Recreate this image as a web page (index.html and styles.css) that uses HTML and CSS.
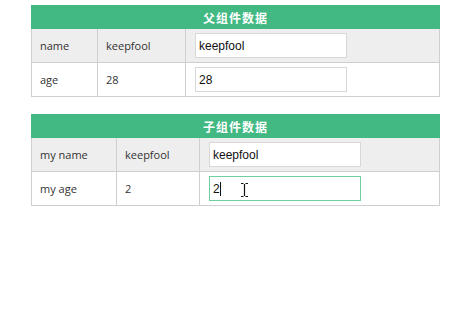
FILE: index.html
```html
<!DOCTYPE html>
<html>
<head>
<meta charset="utf-8">
<link rel="stylesheet" href="styles.css">
</head>
<body>
<div class="page">
  <table class="grid parent">
    <colgroup><col class="w1"><col class="w2"><col></colgroup>
    <tr><th colspan="3">父组件数据</th></tr>
    <tr class="alt">
      <td>name</td>
      <td>keepfool</td>
      <td class="c3"><input class="field" type="text" value="keepfool"></td>
    </tr>
    <tr>
      <td>age</td>
      <td>28</td>
      <td class="c3"><input class="field" type="text" value="28"></td>
    </tr>
  </table>

  <table class="grid child">
    <colgroup><col class="w1"><col class="w2"><col></colgroup>
    <tr><th colspan="3">子组件数据</th></tr>
    <tr class="alt">
      <td>my name</td>
      <td>keepfool</td>
      <td class="c3"><input class="field" type="text" value="keepfool"></td>
    </tr>
    <tr>
      <td>my age</td>
      <td>2</td>
      <td class="c3">
        <div class="field focus"><span>2</span><span class="caret"></span>
          <svg class="ibeam" width="9" height="16" viewBox="0 0 9 16"><path d="M1 1.5h2.5M5.5 1.5H8M4.5 2v12M1 14.5h2.5M5.5 14.5H8" stroke="#111" stroke-width="1.2" fill="none"/></svg>
        </div>
      </td>
    </tr>
  </table>
</div>
</body>
</html>
```
FILE: styles.css
```css
html, body { margin: 0; padding: 0; background: #fff; }
.page {
  padding: 5px 0 0 31px;
  display: flex;
  flex-direction: column;
  gap: 17px;
  font-family: "Open Sans", "DejaVu Sans", sans-serif;
}
.grid {
  border-collapse: collapse;
  width: 409px;
  table-layout: fixed;
  font-size: 11px;
  color: #333;
}
.parent .w1 { width: 66px; }
.parent .w2 { width: 88px; }
.child .w1 { width: 85px; }
.child .w2 { width: 83px; }
.grid th {
  background: #42b983;
  color: #fff;
  height: 22px;
  padding: 0;
  font-family: "Noto Sans CJK SC", sans-serif;
  font-size: 12px;
  font-weight: bold;
  letter-spacing: 1px;
  border: 1px solid #42b983;
}
.grid td {
  border: 1px solid #cfcfcf;
  height: 34px;
  padding: 0 0 0 8px;
  box-sizing: border-box;
}
.grid tr.alt td { background: #eeeeee; }
.grid td.c3 { padding-left: 9px; }
.field {
  display: flex;
  align-items: center;
  position: relative;
  box-sizing: border-box;
  width: 152px;
  height: 25px;
  margin: 0;
  padding: 0 3px;
  border: 1px solid #d8d8d8;
  background: #fff;
  font-family: "Liberation Sans", Arial, sans-serif;
  font-size: 12px;
  color: #111;
  outline: none;
}
.field.focus { border-color: #6fcf9f; }
.caret {
  display: inline-block;
  width: 1px;
  height: 14px;
  background: #111;
}
.ibeam {
  position: absolute;
  left: 30px;
  top: 5px;
}
```
